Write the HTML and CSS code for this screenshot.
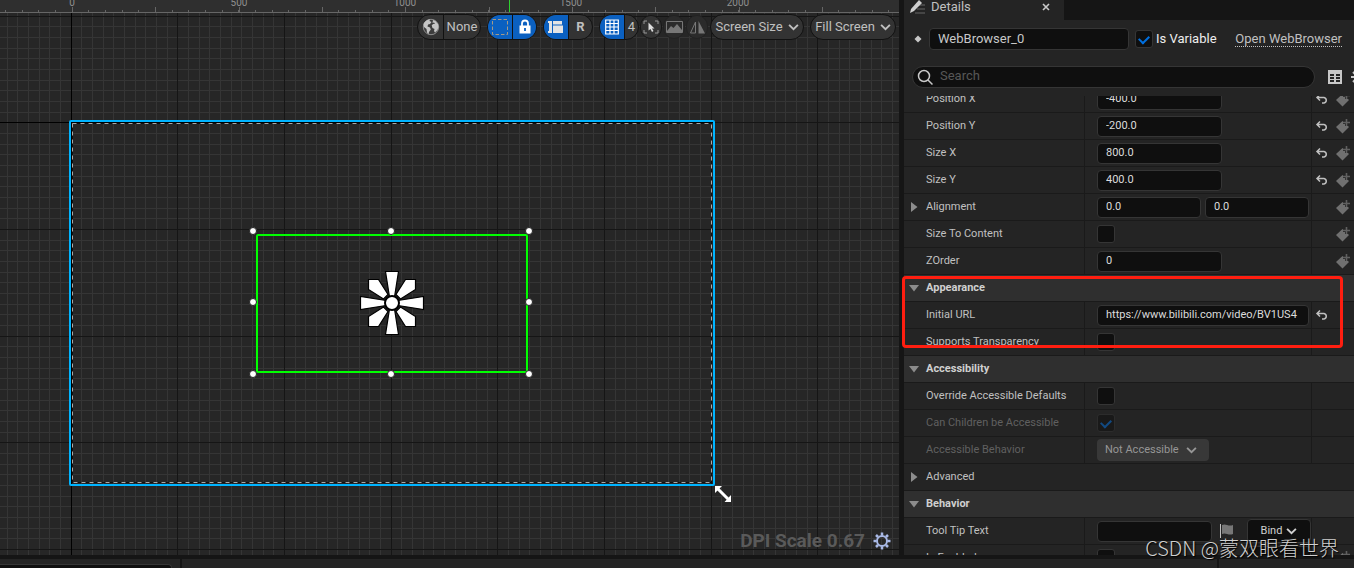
FILE: index.html
```html
<!DOCTYPE html>
<html lang="en">
<head>
<meta charset="utf-8">
<title>Widget Designer</title>
<link rel="stylesheet" href="styles.css">
</head>
<body>
<svg class="defs" aria-hidden="true">
  <symbol id="undo" viewBox="0 0 14 12"><path d="M5 1.500 2 4.500l3 3M2.500 4.500H9a2.800 2.800 0 0 1 0 5.500H7" fill="none" stroke="#c0c0c0" stroke-width="1.500"/></symbol>
  <symbol id="key" viewBox="0 0 16 16"><path d="M7.500 3 1 9l6.500 6.500L14 9z" fill="#707070"/><path d="M11.500 1v7M8 4.500h7" stroke="#242424" stroke-width="3"/><path d="M11.500 1v7M8 4.500h7" stroke="#606060" stroke-width="1.600"/></symbol>
  <symbol id="chev" viewBox="0 0 10 7"><path d="m1 1.500 4 4 4-4" fill="none" stroke="currentColor" stroke-width="1.700"/></symbol>
  <symbol id="right" viewBox="0 0 7 10"><path d="M0 0v10l6.500-5z" fill="#8c8c8c"/></symbol>
  <symbol id="down" viewBox="0 0 10 7"><path d="M0 0h10L5 6.500z" fill="#8c8c8c"/></symbol>
</svg>
<div class="workspace">
  <main class="canvas">
    <div class="ruler">
      <span class="tick t0">0</span><span class="tick t1">500</span><span class="tick t2">1000</span><span class="tick t3">1500</span><span class="tick t4">2000</span>
      <i class="pointer"></i>
    </div>
    <svg class="stage" aria-hidden="true">
      <path d="M71.500 13V555M0 122.500H715" stroke="#000"/>
      <rect x="72.500" y="123.500" width="639" height="359" fill="none" stroke="#111"/>
      <rect x="72.500" y="123.500" width="639" height="359" fill="none" stroke="#a8a8a8" stroke-dasharray="4 4"/>
      <rect x="70" y="121" width="644" height="364" rx="1" fill="none" stroke="#00b4ff" stroke-width="2"/>
      <rect x="257" y="235" width="270" height="137" rx="1" fill="none" stroke="#00ff00" stroke-width="2"/>
      <g fill="#fff" stroke="#222" stroke-width="1">
        <circle cx="253" cy="231" r="3.500"/><circle cx="391" cy="231" r="3.500"/><circle cx="529" cy="231" r="3.500"/>
        <circle cx="253" cy="302" r="3.500"/><circle cx="529" cy="302" r="3.500"/>
        <circle cx="253" cy="374" r="3.500"/><circle cx="391" cy="374" r="3.500"/><circle cx="529" cy="374" r="3.500"/>
      </g>
      <g transform="translate(392 303)" fill="#fff" stroke="#000" stroke-width="1.200">
        <path id="petal" d="M-6.500-31.500h13L2.500-6h-5z"/>
        <path id="leaf" d="M-23.500-23.500h10L-4-8.500-8.500-4-23.500-13.500z"/>
        <use href="#petal" transform="rotate(90)"/><use href="#petal" transform="rotate(180)"/><use href="#petal" transform="rotate(270)"/>
        <use href="#leaf" transform="rotate(90)"/><use href="#leaf" transform="rotate(180)"/><use href="#leaf" transform="rotate(270)"/>
        <circle r="7" stroke-width="2"/>
      </g>
      <g transform="translate(715 486)"><path d="M0 0h7L0 7zM16 16H9.500l6.500-7z" fill="#fff"/><path d="m3 3 10 10" stroke="#fff" stroke-width="3"/></g>
    </svg>
    <div class="toolbar">
      <div class="pill">
        <button class="seg wide" aria-label="Localization"><svg width="18" height="18" viewBox="0 0 18 18"><circle cx="9" cy="9" r="7.700" fill="#3c3c3c" stroke="#8c8c8c"/><path d="M1.500 6C2.500 3.500 5 1.500 8 1.200L7.500 3l2 1-1.500 2-2 .5-.5 2 2.500 1 .8 2-1.800 2.500-.5 2.300L5 14.500 4.500 11 2 9zM11 2l2.500 1 2.500 3 .5 3-1 3-2.500 2.500-1-1.500.5-2-2-1-.8-2.500 1.300-1.500 2-.3-1-1.200-1.500.5z" fill="#c4c4c4"/></svg></button>
        <button class="seg none">None</button>
      </div>
      <div class="pill">
        <button class="seg on" aria-label="Show outlines"><svg width="18" height="18" viewBox="0 0 18 18"><rect x="1.500" y="1.500" width="15" height="15" fill="none" stroke="#a49a87" stroke-dasharray="3.500 2"/></svg></button>
        <button class="seg on" aria-label="Respect locks"><svg width="14" height="16" viewBox="0 0 14 16"><path d="M4 7V4.500a3 3 0 0 1 6 0V7" fill="none" stroke="#fff" stroke-width="1.800"/><path d="M1.500 6.500h11v8h-11z" fill="#fff"/><path d="M7 9v3" stroke="#0b60c0" stroke-width="1.800"/></svg></button>
      </div>
      <div class="pill">
        <button class="seg on" aria-label="Flow layout"><svg width="16" height="14" viewBox="0 0 16 14" fill="#e4e4e4"><path d="M0 1h4v2H0zM1 1h3v12H1zM0 11h4v2H0zM5 1h9v3.500H5zM5 5.500h10V13H5z"/></svg></button>
        <button class="seg r">R</button>
      </div>
      <div class="tools">
        <div class="pill">
          <button class="seg on" aria-label="Grid snapping"><svg width="14" height="16" viewBox="0 0 14 16"><path d="M.7 1h12.600v14H.7zM5 1v14M9 1v14M1 4.500h12M1 8h12M1 11.500h12" fill="none" stroke="#fff" stroke-width="1.200"/></svg></button>
          <button class="seg four">4</button>
        </div>
        <button class="round" aria-label="Zoom to fit"><svg width="16" height="14" viewBox="0 0 16 14"><path d="M1 4V1h3M12 1h3v3M15 10v3h-3M4 13H1v-3" fill="none" stroke="#999"/><path d="M5.500 2.500v8L7.500 9l1.500 3 1.500-1L9 8.500h2.500z" fill="#ddd"/></svg></button>
        <button class="round dim" aria-label="Preview background"><svg width="17" height="12" viewBox="0 0 17 12"><path d="M.5.5h16v11H.5z" fill="none" stroke="#777"/><path d="M1 10 5 5l2.500 2L11 3l5 6v2H1z" fill="#777"/></svg></button>
        <button class="round dim" aria-label="Mirror"><svg width="17" height="13" viewBox="0 0 17 13"><path d="M6.500 1v11h-5z" fill="none" stroke="#777"/><path d="M9.500 0 16 12.500H9.500z" fill="#777"/></svg></button>
        <button class="pill drop screen">Screen Size <svg width="11" height="8"><use href="#chev"/></svg></button>
      </div>
      <button class="pill drop fill">Fill Screen <svg width="11" height="8"><use href="#chev"/></svg></button>
    </div>
    <div class="dpi">DPI Scale 0.67
      <button class="gear" aria-label="DPI settings"><svg width="18" height="18" viewBox="-9 -9 18 18"><circle r="5" fill="none" stroke="#a9b9e6" stroke-width="2"/><path d="M0-5.500V-8.500M0 5.500v3M-5.500 0h-3M5.500 0h3M-4-4l-2-2M4-4l2-2M-4 4l-2 2M4 4l2 2" stroke="#a9b9e6" stroke-width="2.500"/></svg></button>
    </div>
  </main>
  <aside class="details">
    <div class="tabs"><div class="tab">
      <svg width="17" height="15" viewBox="0 0 17 15"><path d="M9 5h7M8 9h8M6 13h10" stroke="#666"/><path d="m1 13 1-4 8-9 3 3-8 8z" fill="#d0d0d0"/></svg>
      <span>Details</span><button aria-label="Close"><svg width="8" height="8" viewBox="0 0 8 8"><path d="m1 1 6 6M7 1 1 7" stroke="#c8c8c8" stroke-width="1.600"/></svg></button>
    </div></div>
    <div class="ident">
      <svg width="8" height="8" viewBox="0 0 8 8"><path d="m4 .5 3.500 3.500L4 7.500.5 4z" fill="#c8c8c8"/></svg>
      <input class="field name" aria-label="Name" value="WebBrowser_0">
      <label class="isvar"><input type="checkbox" checked>Is Variable</label>
      <a href="#">Open WebBrowser</a>
    </div>
    <div class="find">
      <div class="search"><svg width="17" height="17" viewBox="0 0 17 17"><circle cx="7" cy="7" r="5.500" fill="none" stroke="#c8c8c8" stroke-width="1.500"/><path d="m11 11 4.500 4.500" stroke="#c8c8c8" stroke-width="1.500"/></svg><input type="search" aria-label="Search" placeholder="Search"></div>
      <button aria-label="Property matrix"><svg width="14" height="14" viewBox="0 0 14 14"><path d="M0 0h14v14H0z" fill="#c8c8c8"/><path d="M2 4h4v2H2zM8 4h4v2H8zM2 7h4v2H2zM8 7h4v2H8zM2 10h4v2H2zM8 10h4v2H8z" fill="#242424"/></svg></button>
      <button class="cog" aria-label="Settings"><svg width="14" height="14" viewBox="0 0 14 14"><path d="M0 7h5M2 2l2 2M2 12l2-2" stroke="#c8c8c8" stroke-width="2"/></svg></button>
    </div>
    <div class="props">
      <div class="list">
        <div class="row"><label for="px">Position X</label><div class="val"><input id="px" class="field num" value="-400.0"></div><div class="act"><svg class="undo"><use href="#undo"/></svg><svg class="key"><use href="#key"/></svg></div></div>
        <div class="row"><label for="py">Position Y</label><div class="val"><input id="py" class="field num" value="-200.0"></div><div class="act"><svg class="undo"><use href="#undo"/></svg><svg class="key"><use href="#key"/></svg></div></div>
        <div class="row"><label for="sx">Size X</label><div class="val"><input id="sx" class="field num" value="800.0"></div><div class="act"><svg class="undo"><use href="#undo"/></svg><svg class="key"><use href="#key"/></svg></div></div>
        <div class="row"><label for="sy">Size Y</label><div class="val"><input id="sy" class="field num" value="400.0"></div><div class="act"><svg class="undo"><use href="#undo"/></svg><svg class="key"><use href="#key"/></svg></div></div>
        <div class="row"><label for="ax"><svg class="right"><use href="#right"/></svg>Alignment</label><div class="val"><input id="ax" class="field" value="0.0"><input aria-label="Alignment Y" class="field" value="0.0"></div><div class="act"><svg class="key"><use href="#key"/></svg></div></div>
        <div class="row"><label for="sc">Size To Content</label><div class="val"><input id="sc" type="checkbox"></div><div class="act"><svg class="key"><use href="#key"/></svg></div></div>
        <div class="row"><label for="zo">ZOrder</label><div class="val"><input id="zo" class="field num" value="0"></div><div class="act"><svg class="key"><use href="#key"/></svg></div></div>
        <button class="head"><svg class="down"><use href="#down"/></svg>Appearance</button>
        <div class="row"><label for="url">Initial URL</label><div class="val"><input id="url" class="field" value="https://www.bilibili.com/video/BV1US4"></div><div class="act"><svg class="undo"><use href="#undo"/></svg></div></div>
        <div class="row"><label for="st">Supports Transparency</label><div class="val"><input id="st" type="checkbox"></div><div class="act"></div></div>
        <button class="head"><svg class="down"><use href="#down"/></svg>Accessibility</button>
        <div class="row"><label for="oa">Override Accessible Defaults</label><div class="val"><input id="oa" type="checkbox"></div><div class="act"></div></div>
        <div class="row off"><label for="cc">Can Children be Accessible</label><div class="val"><input id="cc" type="checkbox" checked disabled></div><div class="act"></div></div>
        <div class="row off"><label for="ab">Accessible Behavior</label><div class="val"><span class="combo"><select id="ab" disabled><option>Not Accessible</option></select><svg width="11" height="8"><use href="#chev"/></svg></span></div><div class="act"></div></div>
        <button class="head plain"><svg class="right"><use href="#right"/></svg>Advanced</button>
        <button class="head"><svg class="down"><use href="#down"/></svg>Behavior</button>
        <div class="row"><label for="tt">Tool Tip Text</label><div class="val wide-val"><input id="tt" class="field tip"><svg class="flag" viewBox="0 0 14 14"><path d="M.5 0v14" stroke="#c0c0c0"/><path d="M2 1c4-2 6 2 11 0v9c-5 2-7-2-11 0z" fill="#777"/></svg><button class="bind">Bind <svg width="11" height="8"><use href="#chev"/></svg></button></div><div class="act"></div></div>
        <div class="row"><label for="ie">Is Enabled</label><div class="val wide-val"><input id="ie" type="checkbox"><button class="bind" aria-label="Bind"></button></div><div class="act"><svg class="key"><use href="#key"/></svg></div></div>
      </div>
    </div>
    <div class="mark"></div>
  </aside>
</div>
<footer class="dock"><div class="pane first"><div class="slot"></div></div><div class="pane mid"></div><div class="pane last"></div></footer>
<div class="credit">CSDN @蒙双眼看世界</div>
</body>
</html>
```
FILE: styles.css
```css
* { box-sizing: border-box; }
body {
  margin: 0; height: 100vh; overflow: hidden; position: relative;
  display: flex; flex-direction: column;
  background: #151515; color: #c0c0c0;
  font: 11px/14px Roboto, "Noto Sans CJK SC", sans-serif;
}
button, input, select { font: inherit; color: inherit; margin: 0; }
button { border: 0; padding: 0; background: none; }
svg { display: block; flex: none; }
.defs { position: absolute; width: 0; height: 0; }
.workspace { flex: 1; min-height: 0; display: flex; gap: 5px; }

.canvas {
  flex: 1; min-width: 0; position: relative; overflow: hidden;
  background-color: #262626;
  background-image:
    linear-gradient(90deg, #151515 1px, transparent 1px, transparent 106px, #151515 106px, #151515 107px, transparent 107px, transparent 213px, #151515 213px, #151515 214px, transparent 214px),
    linear-gradient(#151515 1px, transparent 1px, transparent 106px, #151515 106px, #151515 107px, transparent 107px, transparent 213px, #151515 213px, #151515 214px, transparent 214px),
    linear-gradient(90deg, #353535 1px, transparent 1px, transparent 10px, #353535 10px, #353535 11px, transparent 11px, transparent 21px, #353535 21px, #353535 22px, transparent 22px),
    linear-gradient(#353535 1px, transparent 1px, transparent 10px, #353535 10px, #353535 11px, transparent 11px, transparent 21px, #353535 21px, #353535 22px, transparent 22px);
  background-size: 320px 320px, 320px 320px, 32px 32px, 32px 32px;
  background-position: 71px 0, 0 16px, 71px 0, 0 16px;
}
.ruler {
  position: relative; height: 13px; border-bottom: 1px solid #666;
  background-color: #2f2f2f;
  background-image:
    linear-gradient(90deg, #666 1px, transparent 1px, transparent 83px, #666 83px, #666 84px, transparent 84px, transparent 167px, #666 167px, #666 168px, transparent 168px),
    linear-gradient(90deg, #666 1px, transparent 1px, transparent 16px, #666 16px, #666 17px, transparent 17px, transparent 33px, #666 33px, #666 34px, transparent 34px);
  background-size: 250px 5px, 50px 2px;
  background-position: 72px 7px, 72px 10px;
  background-repeat: repeat-x;
}
.tick { position: absolute; top: -4px; width: 40px; text-align: center; color: #909090; font-size: 10px; }
.t0 { left: 52px; } .t1 { left: 219px; } .t2 { left: 385px; } .t3 { left: 551px; } .t4 { left: 718px; }
.pointer { position: absolute; left: 509px; top: 0; width: 1px; height: 12px; background: #2fd02f; }
.stage { position: absolute; inset: 0; width: 100%; height: 100%; }

.toolbar { position: absolute; top: 14px; right: 3px; display: flex; align-items: center; gap: 6px; font-size: 13px; }
.tools { display: flex; align-items: center; gap: 1px; }
.pill { display: flex; height: 26px; border: 1px solid #111; border-radius: 13px; background: #333; overflow: hidden; }
.seg { width: 24px; display: flex; align-items: center; justify-content: center; }
.seg + .seg { border-left: 1px solid #111; }
.wide { width: 25px; }
.seg.none { width: 37px; }
.on { background: #0b60c0; }
.r { font-weight: 700; }
.seg.four { width: 14px; }
.round { width: 22px; height: 24px; border: 1px solid #171717; border-radius: 12px; background: #333; display: flex; align-items: center; justify-content: center; }
.dim { background: #2b2b2b; border-color: #222; }
.drop { align-items: center; justify-content: center; gap: 5px; }
.screen { width: 94px; margin-left: 1px; }
.fill { width: 86px; }
.dpi { position: absolute; right: 8px; bottom: 3px; display: flex; align-items: center; gap: 8px; font-size: 19px; line-height: 22px; font-weight: 700; color: #5a5a5a; }

.details { width: 450px; flex: none; position: relative; display: flex; flex-direction: column; background: #242424; }
.tabs { height: 20px; background: #151515; }
.tab { width: 160px; height: 20px; padding: 0 14px 6px 5px; background: #242424; display: flex; align-items: center; gap: 5px; font-size: 13px; }
.tab button { margin-left: auto; }
.ident { height: 38px; padding: 0 12px 0 10px; display: flex; align-items: center; font-size: 13px; }
.field { min-width: 0; flex: 1; height: 21px; padding: 0 8px 2px; border: 1px solid #353535; border-radius: 4px; background: #0f0f0f; color: #dcdcdc; }
.ident .name { flex: none; width: 200px; height: 22px; margin: 0 6px 0 7px; color: #c8c8c8; }
.isvar { display: flex; align-items: center; gap: 3px; color: #eee; }
.ident a { margin-left: auto; color: #c0c0c0; text-decoration: none; border-bottom: 1px dotted #c0c0c0; }
input[type="checkbox"] { appearance: none; flex: none; width: 18px; height: 18px; border: 1px solid #353535; border-radius: 3px; background: #0f0f0f; display: grid; place-items: center; }
input[type="checkbox"]:checked::before { content: ""; width: 8px; height: 5px; margin-bottom: 2px; border: solid #0070e0; border-width: 0 0 2px 2px; transform: rotate(-45deg); }
.find { height: 38px; padding-left: 8px; display: flex; align-items: center; gap: 13px; overflow: hidden; }
.search { width: 403px; height: 22px; flex: none; padding: 0 4px; display: flex; align-items: center; border: 1px solid #353535; border-radius: 11px; background: #0f0f0f; font-size: 13px; }
.search input { flex: 1; border: 0; padding: 0 6px 2px; background: none; }
.search input::placeholder { color: #575757; opacity: 1; }
.cog { margin-left: -4px; }

.props { flex: 1; min-height: 0; overflow: hidden; }
.list { display: flex; flex-direction: column; margin-top: -10px; }
.row { flex: none; height: 27px; display: flex; border-bottom: 1px solid #1a1a1a; }
.row label { width: 181px; padding-left: 22px; border-right: 1px solid #1a1a1a; line-height: 25px; position: relative; white-space: nowrap; }
.val { width: 227px; padding: 0 2px 0 12px; display: flex; align-items: center; gap: 4px; border-right: 1px solid #1a1a1a; }
.wide-val { padding-right: 0; }
.num { flex: none; width: 125px; }
.act { flex: 1; display: flex; align-items: center; padding: 0 3px; }
.undo { width: 14px; height: 12px; }
.key { width: 16px; height: 16px; margin-left: auto; }
.right { position: absolute; left: 7px; top: 8px; width: 7px; height: 10px; }
.down { position: absolute; left: 5px; top: 10px; width: 10px; height: 7px; }
.head { flex: none; position: relative; height: 27px; padding: 0 0 0 22px; text-align: left; font-weight: 700; background: #2f2f2f; border-bottom: 1px solid #1a1a1a; color: #d0d0d0; }
.plain { background: none; font-weight: 400; color: #c0c0c0; }
.off label { color: #606060; }
.off input { opacity: .5; }
.combo { width: 112px; height: 22px; padding: 0 12px 0 8px; display: flex; align-items: center; justify-content: space-between; border-radius: 4px; background: #383838; color: #969696; }
.combo select { appearance: none; border: 0; padding: 0; background: none; opacity: 1; color: #969696; }
.val .tip { flex: none; width: 115px; }
.flag { width: 14px; height: 14px; margin-left: 4px; }
.bind { width: 64px; height: 24px; margin-left: auto; display: flex; align-items: center; justify-content: center; gap: 4px; border: 1px solid #353535; border-radius: 4px; background: #0f0f0f; color: #d0d0d0; }
.mark { position: absolute; left: -2px; top: 276px; width: 441px; height: 72px; border: 3px solid #ff1e10; border-radius: 4px; }

.dock { height: 13px; padding-top: 4px; display: flex; gap: 2px; overflow: hidden; flex: none; }
.pane { background: #242424; height: 9px; }
.first { width: 180px; padding-top: 5px; }
.slot { width: 172px; height: 12px; border: 1px solid #353535; border-left: 0; border-radius: 0 4px 0 0; background: #0f0f0f; }
.mid { flex: 1; }
.last { width: 135px; }
.credit { position: absolute; right: 15px; bottom: 7px; font: 300 20px/26px "Noto Sans CJK SC", sans-serif; color: #d0d0d0; text-shadow: 1px 1px 1px #000; }
```
